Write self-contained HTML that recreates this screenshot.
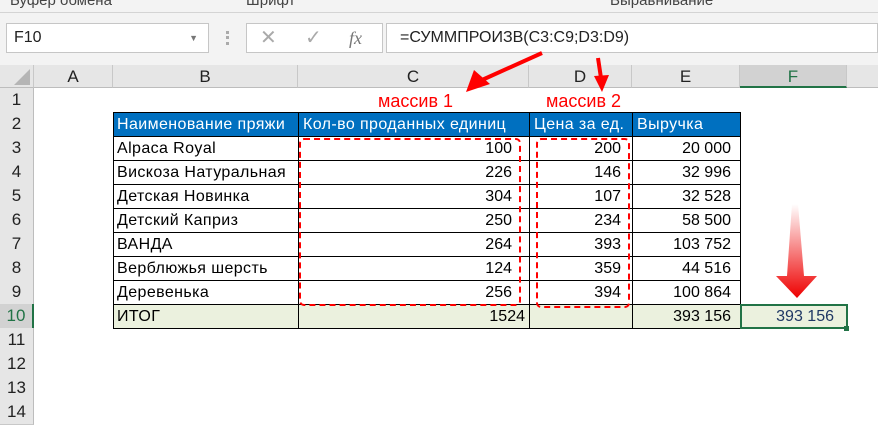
<!DOCTYPE html><html><head><meta charset="utf-8"><style>
*{margin:0;padding:0;box-sizing:border-box}
body{width:878px;height:413px;overflow:hidden;background:#fff;font-family:"Liberation Sans","DejaVu Sans",sans-serif;position:relative}
.a{position:absolute}
.t{position:absolute;font-size:18px;line-height:24px;white-space:nowrap;color:#000}
.rh{position:absolute;left:0;width:34px;background:#e6e6e6;border-bottom:1px solid #c8c8c8;border-right:1px solid #bdbdbd;text-align:center;font-size:17px;color:#222;line-height:24px}
.ch{position:absolute;top:65px;height:23px;background:#e6e6e6;border-right:1px solid #c8c8c8;border-bottom:1px solid #bdbdbd;text-align:center;font-size:17px;line-height:23px;color:#222}
.c{position:absolute;border-right:1px solid #000;border-bottom:1px solid #000;font-size:16px;line-height:23px;padding:0 4px;white-space:nowrap;overflow:hidden;letter-spacing:0.4px}
.r{text-align:right;letter-spacing:0}
</style></head><body>
<div class="a" style="left:0;top:0;width:878px;height:12px;background:#f3f3f3;font-size:15px;color:#444;overflow:hidden">
<span class="a" style="left:10px;top:-8px">Буфер обмена</span><span class="a" style="left:246px;top:-8px">Шрифт</span><span class="a" style="left:610px;top:-8px">Выравнивание</span></div>
<div class="a" style="left:0;top:12px;width:878px;height:53px;background:#f3f3f3;border-top:1px solid #d4d4d4"></div>
<div class="a" style="left:6px;top:23px;width:203px;height:30px;background:#fff;border:1px solid #c6c6c6;font-size:16px;line-height:28px;padding-left:7px;color:#222">F10<span class="a" style="right:10px;top:0;font-size:9px;color:#777">▼</span></div>
<div class="a" style="left:226px;top:31px;width:3px;height:14px;border-left:3px dotted #aaa"></div>
<div class="a" style="left:246px;top:23px;width:137px;height:30px;background:#fff;border:1px solid #c6c6c6;color:#aaa;font-size:20px;line-height:28px">
<span class="a" style="left:13px">✕</span><span class="a" style="left:58px">✓</span><span class="a" style="left:102px;font-family:'Liberation Serif',serif;font-style:italic;color:#777;font-size:18px">fx</span></div>
<div class="a" style="left:386px;top:23px;width:492px;height:30px;background:#fff;border:1px solid #c6c6c6;font-size:16px;line-height:28px;padding-left:13px;color:#222">=СУММПРОИЗВ(C3:C9;D3:D9)</div>
<div class="ch" style="left:0;width:34px"><svg width="34" height="23"><polygon points="30,4 30,20 14,20" fill="#b5b5b5"/></svg></div>
<div class="ch" style="left:34px;width:79px">A</div>
<div class="ch" style="left:113px;width:185px">B</div>
<div class="ch" style="left:298px;width:231px">C</div>
<div class="ch" style="left:529px;width:103px">D</div>
<div class="ch" style="left:632px;width:108px">E</div>
<div class="ch" style="left:740px;width:107px;background:#d2d2d2;color:#217346;border-bottom:2px solid #217346">F</div>
<div class="ch" style="left:847px;width:31px;border-right:none"></div>
<div class="rh" style="top:88px">1</div><div class="rh" style="top:112px">2</div><div class="rh" style="top:136px">3</div><div class="rh" style="top:160px">4</div><div class="rh" style="top:184px">5</div><div class="rh" style="top:208px">6</div><div class="rh" style="top:232px">7</div><div class="rh" style="top:256px">8</div><div class="rh" style="top:280px">9</div><div class="rh" style="top:304px;background:#d2d2d2;color:#217346;border-right:2px solid #217346">10</div><div class="rh" style="top:328px">11</div><div class="rh" style="top:352px">12</div><div class="rh" style="top:376px">13</div><div class="rh" style="top:400px">14</div>
<div id="tb"></div>
<div class="c" style="left:113px;top:112px;width:186px;height:25px;background:#0070c0;color:#fff;border-top:1px solid #000;border-left:1px solid #000;padding:0 3px">Наименование пряжи</div>
<div class="c" style="left:299px;top:112px;width:231px;height:25px;background:#0070c0;color:#fff;border-top:1px solid #000">Кол-во проданных единиц</div>
<div class="c" style="left:530px;top:112px;width:103px;height:25px;background:#0070c0;color:#fff;border-top:1px solid #000">Цена за ед.</div>
<div class="c" style="left:633px;top:112px;width:108px;height:25px;background:#0070c0;color:#fff;border-top:1px solid #000">Выручка</div>
<script>
var d=[["Alpaca Royal",100,200,"20 000"],["Вискоза Натуральная",226,146,"32 996"],["Детская Новинка",304,107,"32 528"],["Детский Каприз",250,234,"58 500"],["ВАНДА",264,393,"103 752"],["Верблюжья шерсть",124,359,"44 516"],["Деревенька",256,394,"100 864"],["ИТОГ","1524","","393 156"]];
var h="";d.forEach(function(r,i){var y=137+i*24,bg=i==7?"background:#ebf1de;":"";var pc=i==7?"4px":"17px";var pd=i==7?"4px":"11px";
h+='<div class="c" style="'+bg+'left:113px;top:'+y+'px;width:186px;height:24px;border-left:1px solid #000;padding:0 3px">'+r[0]+'</div>';
h+='<div class="c r" style="'+bg+'left:299px;top:'+y+'px;width:231px;height:24px;padding-right:'+pc+'">'+r[1]+'</div>';
h+='<div class="c r" style="'+bg+'left:530px;top:'+y+'px;width:103px;height:24px;padding-right:'+pd+'">'+r[2]+'</div>';
h+='<div class="c r" style="'+bg+'left:633px;top:'+y+'px;width:108px;height:24px;padding-right:9px">'+r[3]+'</div>';});
document.getElementById("tb").innerHTML=h;
</script>
<div class="a" style="left:740px;top:304px;width:108px;height:25px;background:#ebf1de;border:2px solid #217346;font-size:16px;line-height:21px;text-align:right;padding-right:12px;color:#1f3864">393 156</div>
<div class="a" style="left:844px;top:326px;width:5px;height:5px;background:#217346"></div>
<div class="a" style="left:299px;top:138px;width:222px;height:168px;border:2px dashed #f00;border-radius:5px"></div>
<div class="a" style="left:536px;top:138px;width:94px;height:170px;border:2px dashed #f00;border-radius:5px"></div>
<div class="t" style="left:378px;top:89px;color:#f00">массив 1</div>
<div class="t" style="left:546px;top:89px;color:#f00">массив 2</div>
<svg class="a" style="left:0;top:0" width="878" height="413">
<defs><linearGradient id="g" x1="0" y1="0" x2="0" y2="1"><stop offset="0" stop-color="#fff"/><stop offset="1" stop-color="#e00"/></linearGradient></defs>
<line x1="542" y1="53" x2="482" y2="80" stroke="#f00" stroke-width="4"/><polygon points="466,92 474,70 490,84" fill="#f00"/>
<line x1="598" y1="58" x2="601" y2="78" stroke="#f00" stroke-width="4"/><polygon points="602,92 594,76 609,75" fill="#f00"/>
<polygon points="792,204 798,204 804,276 817,276 797,298 776,276 787,276" fill="url(#g)"/>
</svg>
</body></html>
